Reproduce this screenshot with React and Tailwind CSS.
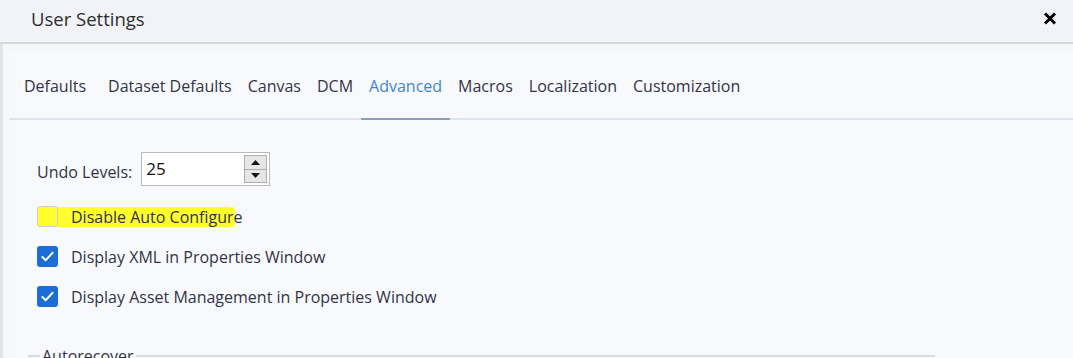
import React, { useState } from "react";

const tabs = [
  "Defaults",
  "Dataset Defaults",
  "Canvas",
  "DCM",
  "Advanced",
  "Macros",
  "Localization",
  "Customization",
];

function Check({ checked }) {
  return checked ? (
    <span className="flex items-center justify-center w-[21px] h-[21px] rounded-[3px] bg-[#1c6ed6]">
      <svg width="15" height="15" viewBox="0 0 16 16" fill="none">
        <path d="M2.5 8.5l3.5 3.5 7.5-8" stroke="#fff" strokeWidth="2" strokeLinecap="round" strokeLinejoin="round" />
      </svg>
    </span>
  ) : (
    <span className="block w-[21px] h-[21px] rounded-[3px] border border-[#c9cfd9]" />
  );
}

export default function App() {
  const [active] = useState("Advanced");

  return (
    <div
      className="w-[1073px] h-[358px] overflow-hidden bg-[#f5f7fb] text-[#2b2b3a]"
      style={{ fontFamily: "'Open Sans', 'Noto Sans', sans-serif" }}
    >
      <div className="h-[44px] flex items-center justify-between pl-[31px] pr-[16px] bg-[#f1f3f8] border-b-2 border-[#d4d6da]">
        <span className="text-[18.5px] text-[#2e2e2e] -mt-[4px]">User Settings</span>
        <svg width="14" height="13" viewBox="0 0 14 13" className="-mt-[6px]">
          <path d="M2 1.5l10 10M12 1.5l-10 10" stroke="#000" strokeWidth="3" />
        </svg>
      </div>

      <div className="flex h-[314px]">
        <div className="w-[3px] bg-[#e2e4e8]" />
        <div className="flex-1 pl-[6px] pt-[8px]">
          <div className="h-full bg-[#f8f9fc]">
            <div className="flex items-end h-[68px] border-b-2 border-[#dfe4ec] pl-[7px] text-[16px]">
              {tabs.map((t, i) => (
                <div
                  key={t}
                  className={
                    "h-full flex items-center px-[8px] -mb-[2px] border-b-2 " +
                    (i === 0 ? "mr-[6px] " : "") +
                    (t === active
                      ? "border-[#8b9dc0] text-[#3e86d6]"
                      : "border-transparent text-[#333348]")
                  }
                >
                  {t}
                </div>
              ))}
            </div>

            <div className="pl-[28px] pt-[32px] text-[16px]">
              <div className="flex items-center gap-[9px]">
                <span className="text-[#333348] pt-[5px]">Undo Levels:</span>
                <div className="flex items-center w-[129px] h-[34px] border border-[#b9b9b9] bg-white pl-[4px] pr-[2px]">
                  <span className="flex-1 text-[17px] text-[#111]">25</span>
                  <div className="flex flex-col w-[23px] h-[28px] border border-[#adadad] bg-[#e6e6e6]">
                    <div className="flex-1 flex items-center justify-center border-b border-[#adadad]">
                      <svg width="9" height="5" viewBox="0 0 9 5"><path d="M4.5 0L9 5H0z" fill="#111" /></svg>
                    </div>
                    <div className="flex-1 flex items-center justify-center">
                      <svg width="9" height="5" viewBox="0 0 9 5"><path d="M0 0h9L4.5 5z" fill="#111" /></svg>
                    </div>
                  </div>
                </div>
              </div>

              <div className="flex flex-col gap-[19px] mt-[20px]">
                <div className="relative flex items-center gap-[13px] h-[21px]">
                  <span className="absolute left-0 top-[1px] w-[198px] h-[20px] bg-[#ffff2e] rounded-[3px]" />
                  <span className="relative"><Check checked={false} /></span>
                  <span className="relative text-[#333348]">Disable Auto Configure</span>
                </div>
                <div className="flex items-center gap-[13px] h-[21px]">
                  <Check checked />
                  <span className="text-[#333348]">Display XML in Properties Window</span>
                </div>
                <div className="flex items-center gap-[13px] h-[21px]">
                  <Check checked />
                  <span className="text-[#333348]">Display Asset Management in Properties Window</span>
                </div>
              </div>

              <div className="mt-[48px] -ml-[9px] w-[907px] border-t-2 border-[#d8dade] relative">
                <span className="absolute left-[12px] -top-[13px] px-[2px] bg-[#f8f9fc] text-[#333348]">Autorecover</span>
              </div>
            </div>
          </div>
        </div>
      </div>
    </div>
  );
}
